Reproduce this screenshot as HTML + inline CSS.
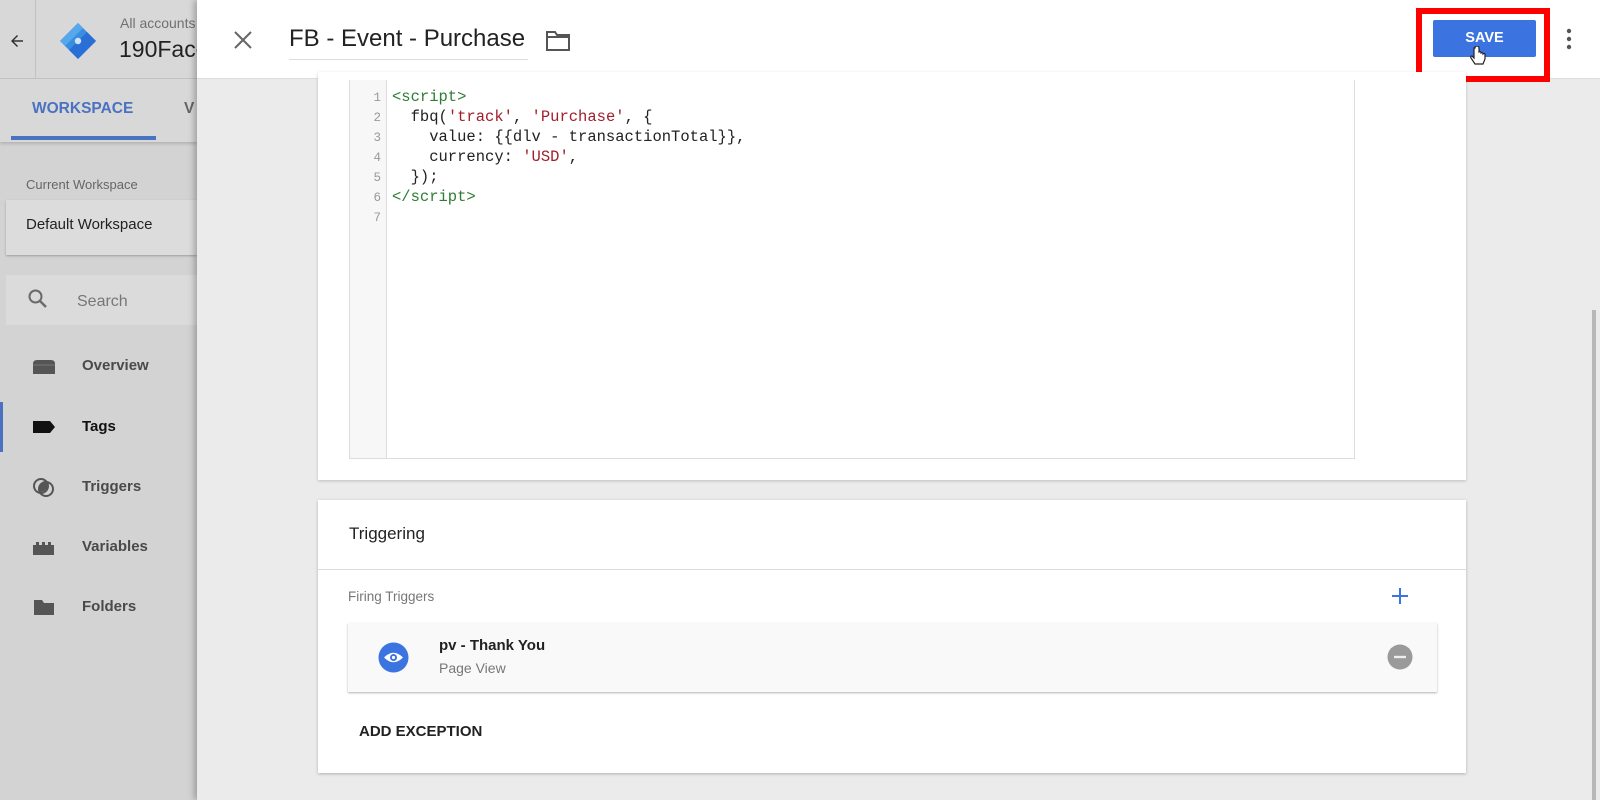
<!DOCTYPE html>
<html><head><meta charset="utf-8">
<style>
*{box-sizing:border-box;margin:0;padding:0}
body{width:1600px;height:800px;overflow:hidden;position:relative;font-family:"Liberation Sans",Arial,sans-serif;background:#ebebeb}
.abs{position:absolute}
#side{left:0;top:0;width:197px;height:800px;background:#d3d3d3}
#sidehead{left:0;top:0;width:197px;height:79px;background:#d8d8d8;border-bottom:1px solid #c4c4c4}
#tabs{left:0;top:79px;width:197px;height:63px;background:#d8d8d8;box-shadow:0 2px 3px rgba(0,0,0,.15)}
.nav{left:0;width:197px;height:40px;font-size:15px;color:#4a4a4a;font-weight:bold}
.nav span{position:absolute;left:82px;top:11px}
.nav svg{position:absolute;left:31px;top:8px}
#panel{left:197px;top:0;width:1403px;height:800px;background:#ebebeb;box-shadow:-3px 0 6px rgba(0,0,0,.25)}
#phead{left:197px;top:0;width:1403px;height:79px;background:#fff;border-bottom:1px solid #ddd}
.card{background:#fff;box-shadow:0 1px 3px rgba(0,0,0,.25)}
.code{font-family:"Liberation Mono",monospace;font-size:15.5px;line-height:20px;color:#222;white-space:pre}
.ln{font-family:"Liberation Mono",monospace;font-size:12.5px;line-height:20px;color:#999;text-align:right;white-space:pre}
.tag{color:#2e7d32}.str{color:#a01d2b}
</style></head><body>
<div id="side" class="abs"></div>
<div id="sidehead" class="abs">
  <div class="abs" style="left:35px;top:0;width:1px;height:79px;background:#c2c2c2"></div>
  <svg class="abs" style="left:8px;top:32px" width="18" height="18" viewBox="0 0 24 24"><path d="M20 11H7.8l5.6-5.6L12 4l-8 8 8 8 1.4-1.4L7.8 13H20z" fill="#333"/></svg>
  <svg class="abs" style="left:58px;top:21px" width="40" height="40" viewBox="0 0 40 40"><path d="M20 2 L38 20 L20 38 L2 20Z" fill="#3a8ee0"/><path d="M20 38 L38 20 L29 11 L11 29Z" fill="#2a6fd6"/><path d="M2 20 L20 2 L25 7 L7 25Z" fill="#56a8ec"/><circle cx="20" cy="20" r="3.2" fill="#cfe3f7"/></svg>
  <div class="abs" style="left:120px;top:15px;font-size:14px;color:#707070">All accounts</div>
  <div class="abs" style="left:119px;top:36px;font-size:23px;color:#222">190Facebook</div>
</div>
<div id="tabs" class="abs">
  <div class="abs" style="left:32px;top:21px;font-size:15.5px;font-weight:bold;color:#4b72c0">WORKSPACE</div>
  <div class="abs" style="left:184px;top:21px;font-size:15.5px;font-weight:bold;color:#666">V</div>
  <div class="abs" style="left:11px;top:57px;width:145px;height:4px;background:#4b72c0"></div>
</div>
<div class="abs" style="left:26px;top:177px;font-size:13px;color:#666">Current Workspace</div>
<div class="abs" style="left:6px;top:200px;width:191px;height:55px;background:#dcdcdc;box-shadow:0 1px 2px rgba(0,0,0,.25)"></div>
<div class="abs" style="left:26px;top:216px;font-size:15px;color:#222">Default Workspace</div>
<div class="abs" style="left:6px;top:275px;width:191px;height:50px;background:#dbdbdb"></div>
<svg class="abs" style="left:26px;top:287px" width="24" height="24" viewBox="0 0 24 24"><circle cx="9.5" cy="9.5" r="6" stroke="#6a6a6a" stroke-width="2" fill="none"/><path d="M14 14l6 6" stroke="#6a6a6a" stroke-width="2.4"/></svg>
<div class="abs" style="left:77px;top:293px;font-size:16px;color:#777">Search</div>

<div class="abs nav" style="top:346px"><svg width="26" height="24" viewBox="0 0 26 24"><path d="M2 10 Q2 6 6 6 H20 Q24 6 24 10 V20 H2Z" fill="#555"/><path d="M2 11h22" stroke="#777" stroke-width="1"/></svg><span>Overview</span></div>
<div class="abs" style="left:0;top:402px;width:3px;height:50px;background:#4b72c0"></div>
<div class="abs nav" style="top:407px;color:#111"><svg width="26" height="24" viewBox="0 0 26 24"><path d="M2 6 H19 L24 12 L19 18 H2Z" fill="#111"/></svg><span>Tags</span></div>
<div class="abs nav" style="top:467px"><svg width="26" height="24" viewBox="0 0 26 24"><circle cx="10" cy="11" r="7" fill="none" stroke="#555" stroke-width="2"/><circle cx="15" cy="14" r="7" fill="none" stroke="#555" stroke-width="2"/><path d="M9 17 A7 7 0 0 1 16 7 A7 7 0 0 1 9 17Z" fill="#555"/></svg><span>Triggers</span></div>
<div class="abs nav" style="top:527px"><svg width="26" height="24" viewBox="0 0 26 24"><path d="M2 10 h3 v-3 h3 v3 h3 v-3 h3 v3 h3 v-3 h3 v3 h3 V20 H2Z" fill="#555"/></svg><span>Variables</span></div>
<div class="abs nav" style="top:587px"><svg width="26" height="24" viewBox="0 0 26 24"><path d="M3 5 H11 L13 8 H23 V20 H3Z" fill="#555"/></svg><span>Folders</span></div>

<div id="panel" class="abs"></div>
<div id="phead" class="abs">
  <svg class="abs" style="left:35px;top:29px" width="22" height="22" viewBox="0 0 22 22"><path d="M3 3L19 19M19 3L3 19" stroke="#666" stroke-width="2"/></svg>
  <div class="abs" style="left:92px;top:25px;font-size:24px;color:#222">FB - Event - Purchase</div>
  <div class="abs" style="left:92px;top:59px;width:239px;height:1px;background:#ddd"></div>
  <svg class="abs" style="left:348px;top:30px" width="26" height="22" viewBox="0 0 26 22"><path d="M2 2 H10 L12 5 H24 V20 H2Z" fill="none" stroke="#555" stroke-width="2"/><path d="M2 7 H24" stroke="#555" stroke-width="2"/></svg>
  <div class="abs" style="left:1219px;top:8px;width:134px;height:74px;border:6px solid #f00"></div>
  <div class="abs" style="left:1236px;top:20px;width:103px;height:37px;background:#3b73e0;border-radius:2px;color:#fff;font-weight:bold;font-size:14.5px;text-align:center;line-height:37px">SAVE</div>
  <svg class="abs" style="left:1272px;top:46px" width="18" height="22" viewBox="0 0 18 22"><path d="M5 2 v10 l-2-2 q-2 0-1 2 l4 6 h8 l2-5 v-5 q-1-1-2 0 q0-2-2-1 q0-2-2-1 v-4 q0-2-2-2 q-2 0-2 2z" fill="#fff" stroke="#222" stroke-width="1.2"/></svg>
  <svg class="abs" style="left:1367px;top:27px" width="10" height="24" viewBox="0 0 10 24"><circle cx="5" cy="4" r="2.2" fill="#555"/><circle cx="5" cy="12" r="2.2" fill="#555"/><circle cx="5" cy="20" r="2.2" fill="#555"/></svg>
</div>
<div class="abs" style="left:1592px;top:310px;width:4px;height:490px;background:#b8b8b8"></div>

<div class="abs card" style="left:318px;top:72px;width:1148px;height:408px;box-shadow:0 1px 3px rgba(0,0,0,.2)"></div>
<div class="abs" style="left:318px;top:79px;width:1148px;height:4px;background:#fff"></div>
<div class="abs" style="left:349px;top:80px;width:1006px;height:379px;border:1px solid #ddd;border-top:none;background:#fff"></div>
<div class="abs" style="left:350px;top:80px;width:37px;height:378px;background:#f7f7f7;border-right:1px solid #ddd"></div>
<div class="abs ln" style="left:350px;top:88px;width:31px">1
2
3
4
5
6
7</div>
<div class="abs code" style="left:392px;top:87px"><span class="tag">&lt;script&gt;</span>
  fbq(<span class="str">'track'</span>, <span class="str">'Purchase'</span>, {
    value: {{dlv - transactionTotal}},
    currency: <span class="str">'USD'</span>,
  });
<span class="tag">&lt;/script&gt;</span>
</div>

<div class="abs card" style="left:318px;top:500px;width:1148px;height:273px"></div>
<div class="abs" style="left:349px;top:524px;font-size:17px;color:#222">Triggering</div>
<div class="abs" style="left:318px;top:569px;width:1148px;height:1px;background:#ddd"></div>
<div class="abs" style="left:348px;top:589px;font-size:13.5px;color:#777">Firing Triggers</div>
<svg class="abs" style="left:1391px;top:587px" width="18" height="18" viewBox="0 0 18 18"><path d="M9 1V17M1 9H17" stroke="#3b73e0" stroke-width="2"/></svg>
<div class="abs" style="left:348px;top:623px;width:1089px;height:69px;background:#f9f9f9;box-shadow:0 1px 2px rgba(0,0,0,.3)"></div>
<svg class="abs" style="left:378px;top:642px" width="31" height="31" viewBox="0 0 31 31"><circle cx="15.5" cy="15.5" r="15" fill="#3b73e0"/><path d="M6 15.5 Q15.5 6 25 15.5 Q15.5 25 6 15.5Z" fill="#fff"/><circle cx="15.5" cy="15.5" r="3.5" fill="#3b73e0"/><circle cx="15.5" cy="15.5" r="1.6" fill="#fff"/></svg>
<div class="abs" style="left:439px;top:637px;font-size:15px;font-weight:bold;color:#222">pv - Thank You</div>
<div class="abs" style="left:439px;top:660px;font-size:14px;color:#777">Page View</div>
<svg class="abs" style="left:1387px;top:644px" width="26" height="26" viewBox="0 0 26 26"><circle cx="13" cy="13" r="12.5" fill="#9a9a9a"/><path d="M7 13H19" stroke="#eee" stroke-width="2.4"/></svg>
<div class="abs" style="left:359px;top:723px;font-size:15px;font-weight:bold;color:#222">ADD EXCEPTION</div>
</body></html>
